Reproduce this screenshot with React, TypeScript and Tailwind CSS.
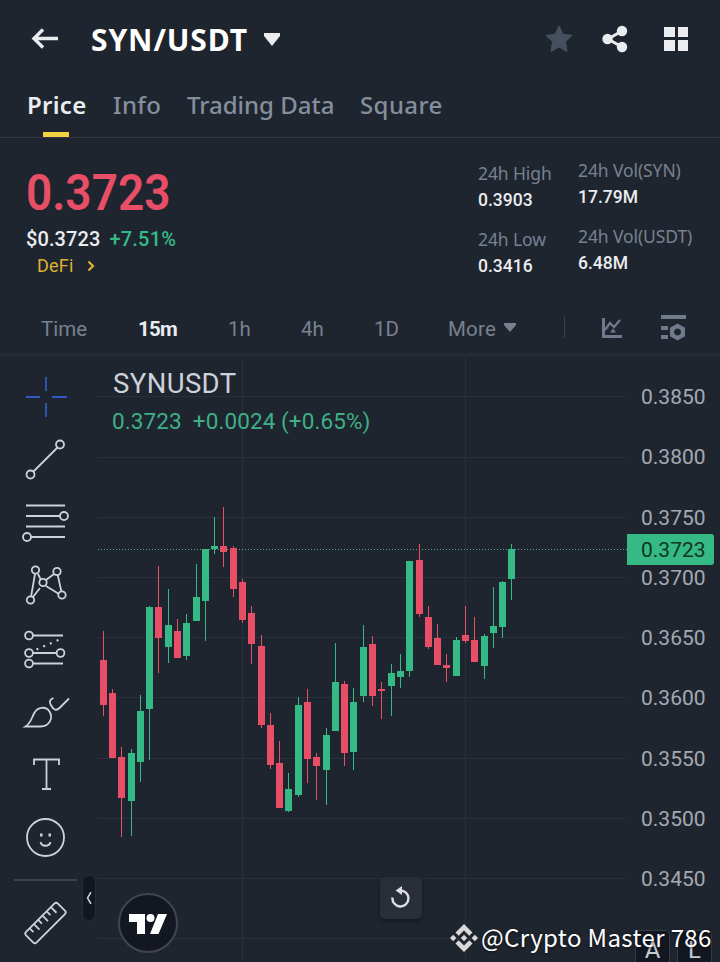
import type { ReactNode } from 'react';

const GREEN = '#35ba86';
const RED = '#e84f66';

// [left, high, body top, body bottom, low, up?] in page pixels
const CANDLES: [number, number, number, number, number, number][] = [
  [100, 631, 660, 705, 716, 0],
  [109, 689, 693, 758, 758, 0],
  [118, 747, 757, 798, 837, 0],
  [128, 749, 753, 801, 836, 1],
  [137, 695, 711, 762, 782, 1],
  [146, 606, 607, 709, 760, 1],
  [155, 566, 607, 638, 673, 0],
  [165, 589, 625, 647, 663, 1],
  [174, 619, 631, 658, 658, 0],
  [183, 614, 623, 656, 660, 1],
  [193, 564, 597, 621, 621, 1],
  [202, 549, 549, 601, 641, 1],
  [211, 517, 546, 549, 554, 1],
  [220, 507, 546, 552, 567, 0],
  [230, 546, 548, 589, 597, 0],
  [239, 579, 582, 620, 623, 0],
  [248, 606, 613, 644, 664, 0],
  [258, 635, 646, 725, 728, 0],
  [267, 713, 725, 765, 769, 0],
  [276, 741, 763, 808, 808, 0],
  [285, 773, 789, 811, 812, 1],
  [295, 697, 705, 795, 797, 1],
  [304, 689, 702, 759, 783, 0],
  [313, 753, 757, 766, 800, 0],
  [323, 728, 735, 770, 805, 1],
  [332, 643, 682, 731, 731, 1],
  [341, 681, 684, 753, 766, 0],
  [350, 688, 702, 752, 770, 1],
  [360, 625, 647, 696, 702, 1],
  [369, 636, 644, 696, 706, 0],
  [378, 682, 689, 691, 719, 0],
  [388, 664, 673, 686, 716, 1],
  [397, 654, 671, 677, 688, 1],
  [406, 561, 561, 671, 677, 1],
  [416, 544, 560, 614, 617, 0],
  [425, 606, 617, 647, 649, 0],
  [434, 624, 638, 665, 665, 0],
  [443, 654, 665, 668, 682, 0],
  [453, 637, 640, 676, 676, 1],
  [462, 606, 635, 641, 643, 0],
  [471, 617, 640, 662, 662, 0],
  [481, 634, 636, 666, 679, 1],
  [490, 587, 626, 633, 648, 1],
  [499, 581, 582, 627, 638, 1],
  [508, 544, 549, 579, 600, 1],
];

const GRID_Y = [396, 457, 517, 577, 637, 697, 758, 818, 878, 938];

const AXIS = ['0.3850', '0.3800', '0.3750', '0.3700', '0.3650', '0.3600', '0.3550', '0.3500', '0.3450'];

const TABS = [
  { name: 'Price', cls: 'ml-[27px] w-[59px] font-semibold tracking-[0.3px] text-[#eaecef]' },
  { name: 'Info', cls: 'ml-[27px] w-[48px] tracking-[0.4px] text-[#848e9c]' },
  { name: 'Trading Data', cls: 'ml-[26px] w-[147px] text-[#848e9c]' },
  { name: 'Square', cls: 'ml-[26px] w-[83px] tracking-[0.4px] text-[#848e9c]' },
];

const INTERVALS = [
  { name: 'Time', cls: 'ml-[41px] w-[97px]' },
  { name: '15m', cls: 'w-[90px] font-bold tracking-[-0.7px] text-[#eaecef]' },
  { name: '1h', cls: 'w-[73px]' },
  { name: '4h', cls: 'w-[73px]' },
  { name: '1D', cls: 'w-[74px]' },
];

function Stat({ label, value }: { label: string; value: string }) {
  return (
    <div className="h-[66px]">
      <div className="font-['Noto_Sans'] text-[17.5px] leading-[26px] tracking-[-0.1px] whitespace-nowrap text-[#78818f]">
        {label}
      </div>
      <div className="mt-px font-['Roboto'] text-[17.5px] leading-[26px] font-medium text-[#eaecef]">{value}</div>
    </div>
  );
}

function Tool({ children }: { children: ReactNode }) {
  return (
    <svg
      className="block h-[63px] w-[92px] shrink-0"
      viewBox="0 0 92 63"
      fill="none"
      stroke="#ccd1da"
      strokeWidth="1.8"
    >
      {children}
    </svg>
  );
}

function Toolbar() {
  return (
    <div className="flex h-full w-[97px] flex-col pt-2">
      <Tool>
        <path d="M46 12v14M46 38v14M26 32h14M52 32h15" stroke="#3159c4" />
      </Tool>
      <Tool>
        <path d="M33 44l25-25" />
        <circle cx="30.500" cy="46.500" r="4" />
        <circle cx="60" cy="16.500" r="4" />
      </Tool>
      <Tool>
        <path d="M26 14.500h39M26 25h34M26 35.500h39M31 46h34" />
        <circle cx="64" cy="25" r="4" />
        <circle cx="27" cy="46" r="4" />
      </Tool>
      <Tool>
        <path d="M35 20l-4 23M38 20l3 6M46 26l8-6M57.500 20l4 18M46 32l13 8M33 43l7-9" />
        <circle cx="35.500" cy="16" r="3.700" />
        <circle cx="57" cy="17.500" r="3.700" />
        <circle cx="43" cy="28.500" r="3.700" />
        <circle cx="62" cy="41" r="3.700" />
        <circle cx="30.500" cy="46" r="3.700" />
      </Tool>
      <Tool>
        <path d="M33 18.500h30M33 36h24M33 46.500h30" />
        <path d="M36.500 32.500L62 21.500" strokeDasharray="2 5.300" strokeWidth="2.200" />
        <circle cx="29" cy="18.500" r="3.900" />
        <circle cx="29" cy="36" r="3.900" />
        <circle cx="60.500" cy="36" r="3.900" />
        <circle cx="29" cy="46.500" r="3.900" />
      </Tool>
      <Tool>
        <path d="M25.500 46.500c5-3 6-8 8.500-13 3.500-7 12-7.500 15.500-2 4 6.500 0 15-9 15z" />
        <path d="M53.500 18c-5 2-4 5-2 8 2 4 5 5 8 2l9.500-9.500" />
      </Tool>
      <Tool>
        <path d="M34 22v-5.500h25V22M46.500 17v29M42 46h9" />
      </Tool>
      <Tool>
        <circle cx="45.500" cy="31.500" r="18.500" />
        <path d="M40.500 36c1 5 9 5 10 0" />
        <path d="M40 29h2.500M48.500 29H51" strokeWidth="3" />
      </Tool>
      <div className="ml-3.5 h-0.5 w-[63px] shrink-0 translate-y-[10px] bg-[#3c434e]" />
      <svg className="mt-[29px] block h-12 w-[92px]" viewBox="0 0 92 48" fill="none" stroke="#ccd1da" strokeWidth="1.800">
        <g transform="rotate(-45 45.500 23)">
          <rect x="23" y="15.500" width="45" height="15" rx="2.500" />
          <path d="M30.500 16v5M36.500 16v7.500M42.500 16v5M48.500 16v7.500M54.500 16v5M60.500 16v7.500" />
        </g>
      </svg>
    </div>
  );
}

function Chart() {
  return (
    <svg className="block h-[605px] w-[530px]" viewBox="97 357 530 605" shapeRendering="crispEdges">
      {GRID_Y.map((y) => (
        <rect key={y} x="97" y={y} width="529" height="1" fill="#29303a" />
      ))}
      <rect x="242" y="357" width="1" height="605" fill="#29303a" />
      <rect x="465" y="357" width="1" height="605" fill="#29303a" />
      <path d="M98 549.500h529" stroke="#56a68c" strokeDasharray="1 2" />
      {CANDLES.map(([x, high, top, bottom, low, up]) => (
        <g key={x} fill={up ? GREEN : RED}>
          <rect x={x + 3} y={high} width="1" height={low - high} />
          <rect x={x} y={top} width="7" height={bottom - top} />
        </g>
      ))}
    </svg>
  );
}

export default function App() {
  return (
    <main className="flex h-[962px] w-[720px] flex-col overflow-hidden bg-[#1f252f] font-['Roboto',sans-serif] text-[#848e9c]">
      {/* Title bar */}
      <header className="flex h-[78px] shrink-0 items-center pl-[31px]">
        <svg className="h-6 w-[28px]" viewBox="0 0 28 24" fill="none" stroke="#eaecef" strokeWidth="3.400">
          <path d="M27 11.500H3M12 2.500L3 11.500l9 9" />
        </svg>
        <h1 className="mt-0.5 ml-8 w-[160px] font-['Noto_Sans'] text-[30px] leading-none font-bold tracking-[0.9px] whitespace-nowrap text-white">
          SYN/USDT
        </h1>
        <svg className="ml-[13px] h-[13px] w-4" viewBox="0 0 16 13" fill="#eaecef">
          <path d="M0 0h16v3L8 13 0 3z" />
        </svg>
        <svg className="ml-[265px] h-7 w-7" viewBox="0 0 28 28" fill="#464f5e" stroke="#464f5e" strokeWidth="1.500" strokeLinejoin="round">
          <path d="M14 1.500l3.700 8 8.800 1-6.500 6 1.800 9.500L14 21.500 6.200 26 8 16.500l-6.500-6 8.800-1z" />
        </svg>
        <svg className="ml-[29px] h-7 w-[26px]" viewBox="0 0 26 28" fill="#eaecef">
          <path d="M20 6L6 14l14 8" fill="none" stroke="#eaecef" strokeWidth="3" />
          <circle cx="20" cy="6" r="5.200" />
          <circle cx="5.500" cy="14" r="5.200" />
          <circle cx="20" cy="22" r="5.200" />
        </svg>
        <div className="-mt-px ml-9 grid grid-cols-2 gap-[3px]">
          {[0, 1, 2, 3].map((i) => (
            <i key={i} className="block size-[10.5px] bg-[#eaecef]" />
          ))}
        </div>
      </header>

      {/* Tabs */}
      <nav className="flex h-[60px] shrink-0 border-b border-[#303742] font-['Noto_Sans'] text-[24px] leading-[54px] font-medium">
        {TABS.map((t, i) => (
          <div key={t.name} className={`flex flex-col whitespace-nowrap ${t.cls}`}>
            <span className="h-[54px]">{t.name}</span>
            {i === 0 && <span className="ml-4 h-[5px] w-[26px] bg-[#f3d33f]" />}
          </div>
        ))}
      </nav>

      {/* Price summary */}
      <section className="flex h-[164px] shrink-0">
        <div className="w-[478px] pl-[26px]">
          <div className="mt-[26px] h-[58px] origin-left scale-x-[0.92] text-[50px] leading-[58px] font-semibold text-[#e84f66]">
            0.3723
          </div>
          <div className="mt-1 flex h-[27px] gap-[9px] text-[20px] leading-[27px] font-medium">
            <span className="tracking-[0.1px] text-[#eaecef]">$0.3723</span>
            <span className="tracking-[0.2px] text-[#35ba86]">+7.51%</span>
          </div>
          <div className="ml-[11px] flex h-[25px] items-center text-[18px] text-[#dfb02f]">
            <span className="w-[50px] tracking-[0.2px]">DeFi</span>
            <svg className="h-3 w-2" viewBox="0 0 8 12" fill="none" stroke="#dfb02f" strokeWidth="2.200">
              <path d="M1.500 1.500L6 6l-4.500 4.500" />
            </svg>
          </div>
        </div>
        <div className="w-[100px] pt-[22px]">
          <Stat label="24h High" value="0.3903" />
          <Stat label="24h Low" value="0.3416" />
        </div>
        <div className="pt-[19px]">
          <Stat label="24h Vol(SYN)" value="17.79M" />
          <Stat label="24h Vol(USDT)" value="6.48M" />
        </div>
      </section>

      {/* Interval picker */}
      <div className="flex h-[55px] shrink-0 items-center border-b-4 border-[#242b35] text-[20.5px] text-[#78818f]">
        {INTERVALS.map((t) => (
          <span key={t.name} className={`pt-[3px] ${t.cls}`}>
            {t.name}
          </span>
        ))}
        <span className="w-[56px] pt-[3px] tracking-[0.2px]">More</span>
        <svg className="h-[9px] w-3" viewBox="0 0 12 9" fill="#78818f">
          <path d="M0 0h12v2L6 9 0 2z" />
        </svg>
        <span className="ml-12 h-[21px] w-px bg-[#39414d]" />
        <svg className="ml-[37px] h-5 w-5" viewBox="0 0 20 20" fill="none" stroke="#717a8a" strokeWidth="3">
          <path d="M1.500 0v18.500H20" />
          <path d="M3 12l5-7 4 4 6-7" strokeWidth="2.300" />
          <path d="M8 14.500l3-4 3 4z" fill="#717a8a" stroke="none" />
        </svg>
        <svg className="mt-px ml-[39px] h-[26px] w-[25px]" viewBox="0 0 25 26" fill="#717a8a">
          <path d="M0 0h25v4H0zM0 11h7v4H0zM0 20h7v4H0z" />
          <path fillRule="evenodd" d="M16.500 8.500l7.500 4.300v8.400l-7.500 4.300L9 21.200v-8.400zM16.500 13.500a3.500 3.500 0 1 0 .01 0z" />
        </svg>
      </div>

      {/* Chart area */}
      <section className="relative flex h-[605px] shrink-0">
        <Toolbar />
        <Chart />
        <div className="flex flex-col pt-2.5 pl-3.5">
          {AXIS.map((p) => (
            <span key={p} className="h-[60.25px] text-[21px] leading-[61px] text-[#a4a9b3]">
              {p}
            </span>
          ))}
        </div>

        <div className="absolute top-[11px] left-[112px] leading-8 whitespace-nowrap">
          <div className="ml-px text-[27.5px] tracking-[0.4px] text-[#cdd1da]">SYNUSDT</div>
          <div className="mt-[5px] flex gap-[11px] text-[22.5px] tracking-[0.1px] text-[#3eaf86]">
            <span>0.3723</span>
            <span>+0.0024 (+0.65%)</span>
          </div>
        </div>

        <div className="absolute top-[177px] left-[627px] h-[31px] w-[87px] rounded-r-[3px] bg-[#35ba86] pl-3.5 text-[21px] leading-[32px] text-[#10351f]">
          0.3723
        </div>

        <div className="absolute top-[518px] left-[82px] flex h-[46px] w-3.5 items-center justify-center rounded-md border border-[#282e39] bg-[#131722]">
          <svg className="h-3 w-1.5" viewBox="0 0 6 12" fill="none" stroke="#ccd1da" strokeWidth="1.500">
            <path d="M5 0L1.500 6 5 12" />
          </svg>
        </div>

        <div className="absolute top-[536px] left-[118px] flex size-[60px] items-center justify-center rounded-full border-2 border-[#43454e] bg-[#131722]">
          <svg className="mt-0.5 h-5 w-[38px]" viewBox="0 0 38 20" fill="#fff">
            <path d="M0 0h16v20H8V8H0zM29 0h9l-8.500 20H21z" />
            <circle cx="21.500" cy="4" r="4" />
          </svg>
        </div>

        <div className="absolute top-[520px] left-[380px] flex size-[42px] items-center justify-center rounded-[5px] bg-[#2a2e39] pb-0.5 shadow-[0_2px_4px_rgba(0,0,0,0.4)]">
          <svg className="h-[22px] w-5" viewBox="0 0 20 22" fill="none" stroke="#dadde5" strokeWidth="2.400">
            <path d="M9 4.500a8 8 0 1 1-7.500 7" />
            <path d="M11 0v9L4.500 4.500z" fill="#dadde5" stroke="none" />
          </svg>
        </div>

        <div className="absolute top-[573px] left-[635px] flex gap-[7px] text-center text-[24px] leading-[39px] text-[#c5c9d2]">
          <span className="h-10 w-[35px] rounded-t-[5px] border border-[#343943] bg-[#131722]">A</span>
          <span className="h-10 w-[35px] rounded-t-[5px] border border-[#343943] bg-[#131722]">L</span>
        </div>

        {/* Watermark */}
        <div className="absolute top-[562px] left-[450px] flex h-9 items-center font-['Noto_Sans_CJK_SC',sans-serif] text-[24px] tracking-[0.38px] whitespace-nowrap text-white [text-shadow:0_1px_3px_rgba(0,0,0,0.6)]">
          <svg className="mt-px mr-[3px] h-7 w-7" viewBox="0 0 28 28" fill="#d9d9da">
            <path d="M14 0l8.500 8.500-3.200 3.200L14 6.400l-5.300 5.300-3.200-3.200zM14 28l8.500-8.500-3.200-3.200-5.300 5.300-5.300-5.300-3.200 3.200zM14 10.800l3.200 3.200-3.200 3.200-3.200-3.200zM3.200 10.800L6.400 14l-3.200 3.200L0 14zM24.800 10.800L28 14l-3.200 3.200-3.200-3.200z" />
          </svg>
          @Crypto Master 786
        </div>
      </section>
    </main>
  );
}
